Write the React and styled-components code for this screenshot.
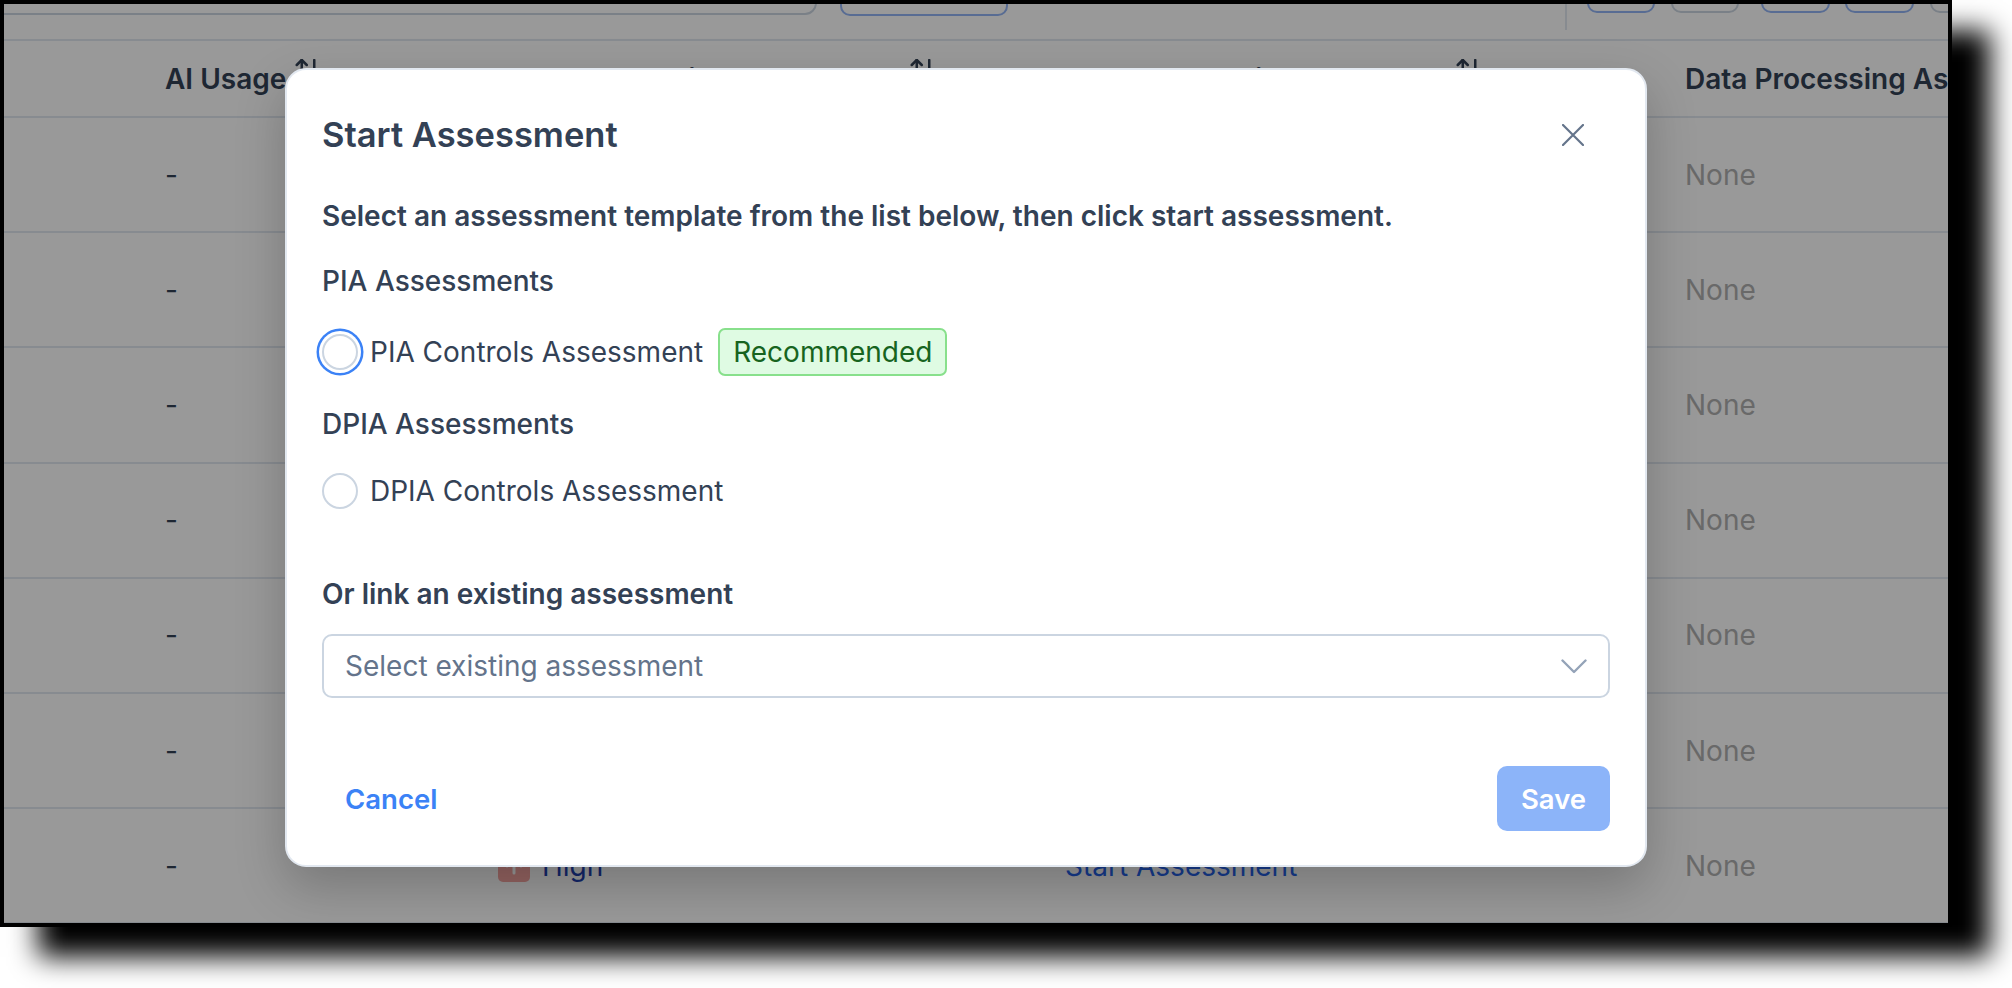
import React from "react";
import styled, { createGlobalStyle } from "styled-components";
import { ArrowUpDown, ArrowUp } from "lucide-react";

const GlobalStyle = createGlobalStyle`
  * { box-sizing: border-box; }
  html, body { margin: 0; padding: 0; background: #fff; }
  body {
    width: 2012px;
    height: 988px;
    overflow: hidden;
    font-family: Inter, "Noto Sans", sans-serif;
    -webkit-font-smoothing: antialiased;
  }
`;

const Frame = styled.div`
  position: relative;
  width: 1952px;
  height: 927px;
  border: 4px solid #000;
  background: #fff;
  box-shadow: 38px 30px 26px #000;
  overflow: hidden;
  color: #334155;
`;

const Toolbar = styled.div`
  display: flex;
  align-items: flex-start;
  height: 65px;
  margin-top: -30px;
`;

const SearchBox = styled.div`
  flex-shrink: 0;
  width: 833px;
  height: 41px;
  margin-left: -20px;
  border: 2px solid #cbd5e1;
  border-radius: 12px;
`;

const ToolButton = styled.div`
  flex-shrink: 0;
  width: ${(p) => p.$w}px;
  height: ${(p) => p.$h}px;
  margin-left: ${(p) => p.$ml}px;
  border: 2px solid ${(p) => (p.$blue ? "#93b4f5" : "#cbd5e1")};
  border-radius: 10px;
`;

const ToolDivider = styled.div`
  flex-shrink: 0;
  width: 2px;
  height: 56px;
  margin-left: 557px;
  background: #e2e8f0;
`;

const Table = styled.div`
  border-top: 2px solid #e2e8f0;
`;

const Row = styled.div`
  display: grid;
  grid-template-columns: 161px 333px 567px 620px 1fr;
  align-items: center;
  height: ${(p) => (p.$head ? "77px" : "115.2px")};
  border-bottom: 2px solid #e2e8f0;
  font-size: 28px;
  line-height: 40px;
  white-space: nowrap;
`;

const HeadCell = styled.div`
  display: flex;
  align-items: center;
  gap: 7px;
  font-weight: 600;
  color: #334155;
  overflow: hidden;

  svg {
    flex-shrink: 0;
    margin-top: -18px;
  }
`;

const Cell = styled.div`
  display: flex;
  align-items: center;
  gap: 12px;
  color: ${(p) => p.$color || "#334155"};
  overflow: hidden;
`;

const RiskIcon = styled.span`
  display: inline-flex;
  align-items: center;
  justify-content: center;
  width: 32px;
  height: 32px;
  border-radius: 5px;
  background: #f7a6a2;
`;

const Overlay = styled.div`
  position: absolute;
  inset: 0;
  background: rgba(0, 0, 0, 0.4);
`;

const Modal = styled.div`
  position: absolute;
  left: 281px;
  top: 64px;
  width: 1362px;
  display: flex;
  flex-direction: column;
  padding: 41px 35px 34px;
  background: #fff;
  border: 2px solid #e2e8f0;
  border-radius: 21px;
  box-shadow: 0 20px 50px rgba(0, 0, 0, 0.22);
  color: #334155;
  font-size: 28px;
  line-height: 40px;
`;

const ModalHeader = styled.div`
  display: flex;
  align-items: center;
  justify-content: space-between;
  height: 48px;
`;

const Title = styled.h2`
  margin: 0;
  font-size: 34.5px;
  line-height: 48px;
  font-weight: 600;
`;

const CloseButton = styled.button`
  display: flex;
  align-items: center;
  justify-content: center;
  width: 48px;
  height: 48px;
  margin-right: 13px;
  padding: 0;
  border: none;
  background: none;
  color: #64748b;
`;

const Lead = styled.p`
  margin: 37px 0 0;
  font-weight: 600;
`;

const SectionTitle = styled.div`
  margin-top: ${(p) => p.$mt}px;
  font-weight: ${(p) => (p.$strong ? 600 : 500)};
`;

const Option = styled.label`
  display: flex;
  align-items: center;
  margin-top: 27px;
  min-height: 40px;
`;

const Radio = styled.span`
  flex-shrink: 0;
  width: 36px;
  height: 36px;
  border: 2px solid #cbd5e1;
  border-radius: 50%;
  background: #fff;
  box-shadow: ${(p) =>
    p.$focused ? "0 0 0 3px #fff, 0 0 0 5.5px #3b82f6" : "none"};
`;

const OptionLabel = styled.span`
  margin-left: 12px;
`;

const Badge = styled.span`
  margin-left: 15px;
  padding: 0 13px;
  line-height: 44px;
  border: 2px solid #88e08c;
  border-radius: 7px;
  background: #dffbe3;
  color: #17641f;
`;

const Select = styled.div`
  display: flex;
  align-items: center;
  justify-content: space-between;
  height: 64px;
  margin-top: 20px;
  padding: 0 21px;
  border: 2px solid #cbd5e1;
  border-radius: 10px;
  color: #64748b;
`;

const Footer = styled.div`
  display: flex;
  align-items: center;
  justify-content: space-between;
  margin-top: 68px;
`;

const TextButton = styled.button`
  height: 65px;
  padding: 0 23px;
  border: none;
  background: none;
  font-family: inherit;
  font-size: 27.5px;
  font-weight: 600;
  color: #3b82f6;
`;

const SaveButton = styled.button`
  width: 113px;
  height: 65px;
  padding: 0;
  border: none;
  border-radius: 10px;
  background: #8cb4f9;
  font-family: inherit;
  font-size: 27.5px;
  font-weight: 600;
  color: #fff;
`;

const rows = [
  { risk: "High", action: "Start Assessment" },
  { risk: "High", action: "Start Assessment" },
  { risk: "Medium", action: "Start Assessment" },
  { risk: "High", action: "Start Assessment" },
  { risk: "Low", action: "Start Assessment" },
  { risk: "High", action: "Start Assessment" },
  { risk: "High", action: "Start Assessment" },
];

const toolButtons = [
  { ml: 20, w: 68, blue: true },
  { ml: 16, w: 68 },
  { ml: 22, w: 69, blue: true },
  { ml: 15, w: 69, blue: true },
  { ml: 16, w: 68 },
];

function SortIcon() {
  return <ArrowUpDown size={30} strokeWidth={2} color="#334155" />;
}

function CloseIcon() {
  return (
    <svg width="22" height="22" viewBox="0 0 22 22" fill="none">
      <path d="M1 1L21 21M21 1L1 21" stroke="currentColor" strokeWidth="2.2" strokeLinecap="round" />
    </svg>
  );
}

function Chevron() {
  return (
    <svg width="26" height="15" viewBox="0 0 26 15" fill="none">
      <path d="M1.5 1.5L13 13L24.5 1.5" stroke="#94a3b8" strokeWidth="2.4" strokeLinecap="round" strokeLinejoin="round" />
    </svg>
  );
}

export default function App() {
  return (
    <>
      <GlobalStyle />
      <Frame>
        <Toolbar>
          <SearchBox />
          <ToolButton $ml={23} $w={168} $h={42} $blue />
          <ToolDivider />
          {toolButtons.map((b, i) => (
            <ToolButton key={i} $ml={b.ml} $w={b.w} $h={39} $blue={b.blue} />
          ))}
        </Toolbar>

        <Table>
          <Row $head>
            <div />
            <HeadCell>
              AI Usage <SortIcon />
            </HeadCell>
            <HeadCell>
              Overall Data Risk Assessment <SortIcon />
            </HeadCell>
            <HeadCell>
              Assessment Link and Status <SortIcon />
            </HeadCell>
            <HeadCell>Data Processing Assessment</HeadCell>
          </Row>
          {rows.map((r, i) => (
            <Row key={i}>
              <div />
              <Cell>-</Cell>
              <Cell $color="#1e40af">
                <RiskIcon>
                  <ArrowUp size={24} strokeWidth={3} color="#fff" />
                </RiskIcon>
                {r.risk}
              </Cell>
              <Cell $color="#2563eb">{r.action}</Cell>
              <Cell $color="#afafaf">None</Cell>
            </Row>
          ))}
        </Table>

        <Overlay>
          <Modal>
            <ModalHeader>
              <Title>Start Assessment</Title>
              <CloseButton aria-label="Close">
                <CloseIcon />
              </CloseButton>
            </ModalHeader>

            <Lead>Select an assessment template from the list below, then click start assessment.</Lead>

            <SectionTitle $mt={25}>PIA Assessments</SectionTitle>
            <Option>
              <Radio $focused />
              <OptionLabel>PIA Controls Assessment</OptionLabel>
              <Badge>Recommended</Badge>
            </Option>

            <SectionTitle $mt={28}>DPIA Assessments</SectionTitle>
            <Option>
              <Radio />
              <OptionLabel>DPIA Controls Assessment</OptionLabel>
            </Option>

            <SectionTitle $mt={63} $strong>
              Or link an existing assessment
            </SectionTitle>
            <Select>
              <span>Select existing assessment</span>
              <Chevron />
            </Select>

            <Footer>
              <TextButton>Cancel</TextButton>
              <SaveButton>Save</SaveButton>
            </Footer>
          </Modal>
        </Overlay>
      </Frame>
    </>
  );
}
